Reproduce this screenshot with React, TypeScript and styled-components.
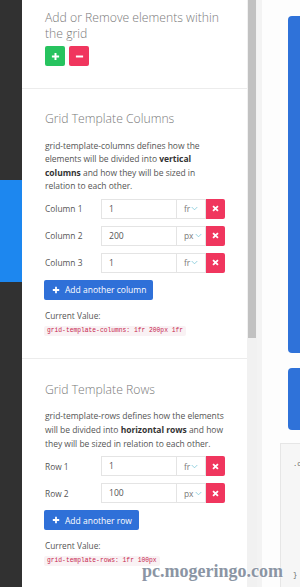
import React from "react";
import styled, { createGlobalStyle } from "styled-components";

const GlobalStyle = createGlobalStyle`
  html, body {
    margin: 0;
    padding: 0;
    background: #ffffff;
  }
  body {
    font-family: "Open Sans", "Noto Sans", sans-serif;
    color: #555555;
  }
  * {
    box-sizing: border-box;
  }
`;

const Page = styled.div`
  position: relative;
  display: flex;
  width: 300px;
  height: 587px;
  overflow: hidden;
`;

const SideNav = styled.div`
  flex-shrink: 0;
  display: flex;
  flex-direction: column;
  width: 22px;
  padding-top: 180px;
  background-color: #313131;
`;
const NavItem = styled.div`
  height: 102px;
  background-color: #1d87ef;
`;

const Panel = styled.div`
  flex-shrink: 0;
  display: flex;
  flex-direction: column;
  width: 225px;
  background-color: #ffffff;
`;
const Section = styled.div<{ $top: number; $bottom: number }>`
  display: flex;
  flex-direction: column;
  padding: ${(p) => p.$top}px 22px ${(p) => p.$bottom}px 23px;
  border-bottom: 1px solid #ececec;
`;
const Heading = styled.h2`
  margin: 0;
  font-size: 12.2px;
  font-weight: 300;
  line-height: 15.5px;
  color: #7a7a7a;
`;
const Intro = styled.p`
  margin: 12px 0 6px;
  font-size: 8.5px;
  letter-spacing: -0.03px;
  line-height: 13.6px;
  color: #555555;
  b {
    font-weight: 700;
    color: #333333;
  }
`;
const ToggleRow = styled.div`
  display: flex;
  gap: 4px;
  margin-top: 5px;
`;
const SquareButton = styled.button<{ $bg: string }>`
  display: flex;
  align-items: center;
  justify-content: center;
  width: 20px;
  height: 20px;
  padding: 0;
  border: none;
  border-radius: 2px;
  background-color: ${(p) => p.$bg};
`;

const Rows = styled.div`
  display: flex;
  flex-direction: column;
  gap: 7px;
`;
const Row = styled.div`
  display: flex;
  align-items: center;
  height: 20px;
`;
const RowLabel = styled.span`
  width: 56px;
  font-size: 8.4px;
  color: #555555;
`;
const ValueInput = styled.div`
  display: flex;
  align-items: center;
  width: 75px;
  height: 20px;
  padding-left: 7px;
  border: 1px solid #e4e4e4;
  border-right: none;
  font-size: 8.6px;
  color: #555555;
`;
const UnitSelect = styled.div`
  display: flex;
  align-items: center;
  gap: 1px;
  width: 30px;
  height: 20px;
  padding-left: 7px;
  border: 1px solid #e4e4e4;
  font-size: 8.4px;
  color: #777777;
`;
const DeleteButton = styled.button`
  display: flex;
  align-items: center;
  justify-content: center;
  width: 19px;
  height: 20px;
  padding: 0;
  border: none;
  border-radius: 0 2px 2px 0;
  background-color: #f0365e;
`;
const AddButton = styled.button`
  align-self: flex-start;
  display: flex;
  align-items: center;
  gap: 5px;
  height: 20px;
  margin-top: 7px;
  margin-left: -1px;
  padding: 0 7px 0 8px;
  border: none;
  border-radius: 2px;
  background-color: #2f70d8;
  font-family: "Open Sans", "Noto Sans", sans-serif;
  font-size: 8.5px;
  color: #ffffff;
`;
const ValueLabel = styled.div`
  margin-top: 10px;
  font-size: 8.3px;
  line-height: 12px;
  color: #555555;
`;
const Code = styled.code`
  align-self: flex-start;
  margin-top: 4px;
  margin-left: -1px;
  padding: 0 3px;
  height: 10px;
  line-height: 10px;
  font-family: "Liberation Mono", "DejaVu Sans Mono", monospace;
  font-size: 6.3px;
  color: #c7254e;
  background-color: #f9f2f4;
  border-radius: 2px;
`;

const Scrollbar = styled.div`
  flex-shrink: 0;
  width: 10px;
  padding: 0 1px;
  background-color: #f1f1f1;
`;
const Thumb = styled.div`
  height: 338px;
  background-color: #c1c1c1;
`;
const Gutter = styled.div`
  flex-shrink: 0;
  width: 5px;
  background-color: #f3f3f3;
`;

const Preview = styled.div`
  flex: 1;
  min-width: 0;
  display: flex;
  flex-direction: column;
  padding: 16px 0 0 18px;
  background-color: #fdfdfd;
`;
const GridBox = styled.div<{ $h: number }>`
  flex-shrink: 0;
  height: ${(p) => p.$h}px;
  margin: 0 0 15px 8px;
  border-radius: 4px 0 0 4px;
  background-color: #2f72d9;
`;
const CodePane = styled.div`
  flex: 1;
  display: flex;
  flex-direction: column;
  justify-content: space-between;
  margin-top: -2px;
  padding: 16px 0 8px 12px;
  border-top: 1px solid #e6e6e6;
  border-left: 1px solid #e6e6e6;
  background-color: #f6f6f6;
  font-family: "Liberation Mono", monospace;
  font-size: 7px;
  color: #666666;
  white-space: nowrap;
  overflow: hidden;
`;

const Watermark = styled.div`
  position: absolute;
  right: 17px;
  bottom: 5px;
  font-family: "Liberation Serif", "DejaVu Serif", serif;
  font-weight: 700;
  font-size: 18px;
  color: #8b95a4;
  text-shadow: 0 0 2px #ffffff, 0 0 2px #ffffff;
`;

const PlusIcon = ({ size = 9 }: { size?: number }) => (
  <svg width={size} height={size} viewBox="0 0 10 10">
    <path d="M5 1v8M1 5h8" stroke="#ffffff" strokeWidth="2.2" />
  </svg>
);
const MinusIcon = () => (
  <svg width="9" height="9" viewBox="0 0 10 10">
    <path d="M1 5h8" stroke="#ffffff" strokeWidth="2.2" />
  </svg>
);
const TimesIcon = () => (
  <svg width="7" height="7" viewBox="0 0 10 10">
    <path d="M1.5 1.5l7 7M8.5 1.5l-7 7" stroke="#ffffff" strokeWidth="2.6" />
  </svg>
);
const Chevron = () => (
  <svg width="7" height="5" viewBox="0 0 8 5">
    <path d="M0.8 0.8L4 4l3.2-3.2" fill="none" stroke="#7cc7d8" strokeWidth="0.9" />
  </svg>
);

interface ITrack {
  label: string;
  value: string;
  unit: string;
}

const columns: ITrack[] = [
  { label: "Column 1", value: "1", unit: "fr" },
  { label: "Column 2", value: "200", unit: "px" },
  { label: "Column 3", value: "1", unit: "fr" }
];
const rows: ITrack[] = [
  { label: "Row 1", value: "1", unit: "fr" },
  { label: "Row 2", value: "100", unit: "px" }
];

const TrackList = ({ items }: { items: ITrack[] }) => (
  <Rows>
    {items.map((item) => (
      <Row key={item.label}>
        <RowLabel>{item.label}</RowLabel>
        <ValueInput>{item.value}</ValueInput>
        <UnitSelect>
          {item.unit}
          <Chevron />
        </UnitSelect>
        <DeleteButton>
          <TimesIcon />
        </DeleteButton>
      </Row>
    ))}
  </Rows>
);

const App = () => {
  return (
    <Page>
      <GlobalStyle />
      <SideNav>
        <NavItem />
      </SideNav>
      <Panel>
        <Section $top={10} $bottom={22}>
          <Heading>Add or Remove elements within the grid</Heading>
          <ToggleRow>
            <SquareButton $bg={"#27c35f"}>
              <PlusIcon />
            </SquareButton>
            <SquareButton $bg={"#f0365e"}>
              <MinusIcon />
            </SquareButton>
          </ToggleRow>
        </Section>
        <Section $top={22} $bottom={22}>
          <Heading>Grid Template Columns</Heading>
          <Intro>
            grid-template-columns defines how the elements will be divided into{" "}
            <b>vertical columns</b> and how they will be sized in relation to
            each other.
          </Intro>
          <TrackList items={columns} />
          <AddButton>
            <PlusIcon size={8} />
            Add another column
          </AddButton>
          <ValueLabel>Current Value:</ValueLabel>
          <Code>grid-template-columns: 1fr 200px 1fr</Code>
        </Section>
        <Section $top={23} $bottom={22}>
          <Heading>Grid Template Rows</Heading>
          <Intro>
            grid-template-rows defines how the elements will be divided into{" "}
            <b>horizontal rows</b> and how they will be sized in relation to
            each other.
          </Intro>
          <TrackList items={rows} />
          <AddButton>
            <PlusIcon size={8} />
            Add another row
          </AddButton>
          <ValueLabel>Current Value:</ValueLabel>
          <Code>grid-template-rows: 1fr 100px</Code>
        </Section>
      </Panel>
      <Scrollbar>
        <Thumb />
      </Scrollbar>
      <Gutter />
      <Preview>
        <GridBox $h={337} />
        <GridBox $h={62} />
        <CodePane>
          <span>.container {"{"}</span>
          <span>{"}"}</span>
        </CodePane>
      </Preview>
      <Watermark>pc.mogeringo.com</Watermark>
    </Page>
  );
};

export default App;
